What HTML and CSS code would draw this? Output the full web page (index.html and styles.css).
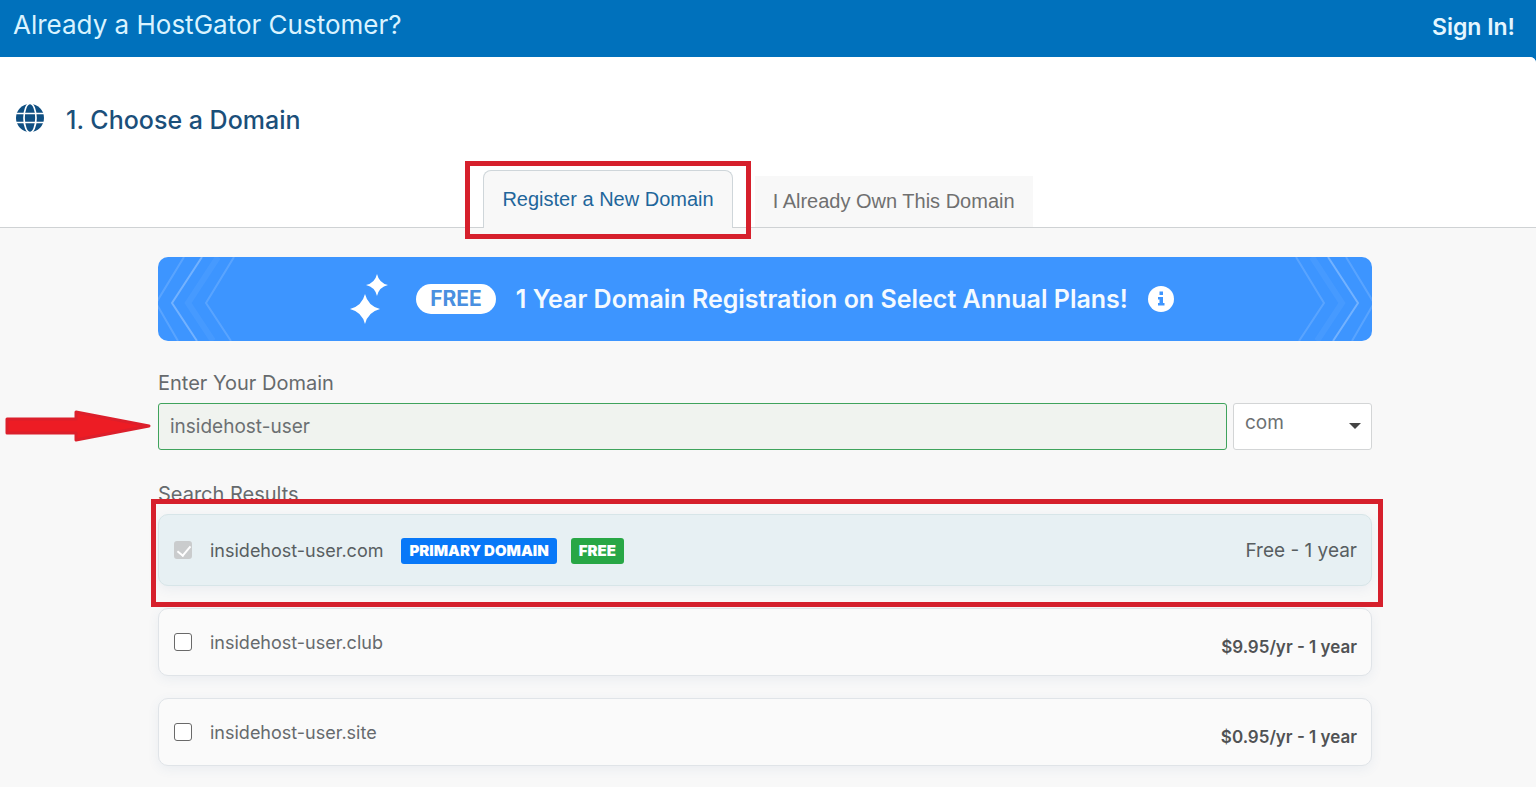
FILE: index.html
```html
<!DOCTYPE html>
<html lang="en">
  <head>
    <meta charset="UTF-8" />
    <meta name="viewport" content="width=device-width, initial-scale=1" />
    <title>Choose a Domain</title>
    <link rel="stylesheet" href="styles.css">
  </head>
  <body>
    <header class="top-bar">
      <span class="top-bar-title">Already a HostGator Customer?</span>
      <a class="sign-in" href="#">Sign In!</a>
    </header>

    <main class="page">
      <section class="intro">
        <div class="step-heading">
          <svg class="globe" viewBox="0 0 28 28" aria-hidden="true">
            <circle cx="14" cy="14" r="14" fill="#0f4f82" />
            <g fill="none" stroke="#fff" stroke-width="1.7">
              <ellipse cx="14" cy="14" rx="6" ry="14.5" />
              <path d="M0 9.5h28M0 18.5h28" />
            </g>
          </svg>
          <h1>1. Choose a Domain</h1>
        </div>

        <div class="tabs" role="tablist">
          <div class="tab-wrapper">
            <button class="tab active" role="tab" aria-selected="true">Register a New Domain</button>
            <div class="highlight highlight-tab"></div>
          </div>
          <button class="tab" role="tab" aria-selected="false">I Already Own This Domain</button>
        </div>
      </section>

      <section class="content">
        <div class="banner">
          <svg class="chevrons" viewBox="0 0 80 84" aria-hidden="true">
            <g fill="none" stroke="#fff">
              <path d="M26 0L-2 46L20 84" stroke-width="2" opacity=".15" />
              <path d="M44 0L14 46L39 84" stroke-width="2" opacity=".28" />
              <path d="M60 0L30 46L55 84" stroke-width="6" opacity=".05" />
              <path d="M76 0L48 46L73 84" stroke-width="2" opacity=".15" />
            </g>
          </svg>
          <svg class="sparkles" viewBox="0 0 38 50" aria-hidden="true">
            <path fill="#fff" d="M27 0Q29 9 38 11Q29 13 27 22Q25 13 16 11Q25 9 27 0ZM15 20Q18 32 30 35Q18 38 15 50Q12 38 0 35Q12 32 15 20Z" />
          </svg>
          <span class="pill">FREE</span>
          <span class="banner-text">1 Year Domain Registration on Select Annual Plans!</span>
          <svg class="info" viewBox="0 0 26 26" aria-hidden="true">
            <circle cx="13" cy="13" r="13" fill="#fff" />
            <path fill="#3d95ff" d="M11.500 5.500h3.500v3.500h-3.500zM10 11h5v6h1.500v2.500H10V17h1.500v-3.500H10z" />
          </svg>
          <svg class="chevrons chevrons-right" viewBox="0 0 80 84" aria-hidden="true">
            <g fill="none" stroke="#fff">
              <path d="M26 0L-2 46L20 84" stroke-width="2" opacity=".15" />
              <path d="M44 0L14 46L39 84" stroke-width="2" opacity=".28" />
              <path d="M60 0L30 46L55 84" stroke-width="6" opacity=".05" />
              <path d="M76 0L48 46L73 84" stroke-width="2" opacity=".15" />
            </g>
          </svg>
        </div>

        <label class="field-label" for="domain">Enter Your Domain</label>
        <div class="domain-row">
          <svg class="arrow" viewBox="0 0 146 32" aria-hidden="true">
            <path d="M2 9H71V2L144 16L71 30V23H2Z" fill="#ed1c24" stroke="#dc1f2b" stroke-width="3" stroke-linejoin="round" />
          </svg>
          <input class="domain-input" type="text" id="domain" value="insidehost-user" />
          <div class="tld">
            <select class="tld-select" aria-label="Extension">
              <option>com</option>
              <option>club</option>
              <option>site</option>
            </select>
          </div>
        </div>

        <h2 class="field-label">Search Results</h2>
        <div class="results">
          <div class="result primary">
            <input type="checkbox" id="result-com" checked disabled />
            <label for="result-com">insidehost-user.com</label>
            <span class="badge">PRIMARY DOMAIN</span>
            <span class="badge free">FREE</span>
            <span class="price">Free - 1 year</span>
            <div class="highlight highlight-result"></div>
          </div>
          <div class="result">
            <input type="checkbox" id="result-club" />
            <label for="result-club">insidehost-user.club</label>
            <span class="price">$9.95/yr - 1 year</span>
          </div>
          <div class="result">
            <input type="checkbox" id="result-site" />
            <label for="result-site">insidehost-user.site</label>
            <span class="price">$0.95/yr - 1 year</span>
          </div>
        </div>
      </section>
    </main>
  </body>
</html>
```
FILE: styles.css
```css
* {
  box-sizing: border-box;
}
body {
  margin: 0;
  font-family: Inter, "Liberation Sans", sans-serif;
  font-size: 18px;
  line-height: 24px;
  color: #666a6d;
  background-color: #0071bc;
}

/* Header */
.top-bar {
  display: flex;
  justify-content: space-between;
  align-items: center;
  padding: 9px 21px 16px 13px;
  font-size: 26px;
  line-height: 32px;
  color: #d9f3ff;
}
.sign-in {
  padding-top: 4px;
  font-size: 23px;
  line-height: 28px;
  font-weight: 600;
  color: #e4f6ff;
  text-decoration: none;
}

.page {
  background-color: #f8f8f8;
  border-top-right-radius: 6px;
}
.intro {
  background-color: #fff;
  border-top-right-radius: 6px;
  border-bottom: 1px solid #cfd2d4;
}
.step-heading {
  display: flex;
  align-items: center;
  gap: 22px;
  padding: 47px 16px 34px;
}
.globe {
  width: 28px;
  height: 28px;
  margin-bottom: 4px;
}
h1 {
  margin: 0;
  font-size: 25px;
  line-height: 32px;
  font-weight: 500;
  color: #1b4f7a;
}

/* Tabs */
.tabs {
  display: flex;
  justify-content: center;
  align-items: flex-end;
  gap: 22px;
  padding-right: 20px;
}
.tab-wrapper {
  position: relative;
  margin-bottom: -1px;
}
.tab {
  display: block;
  height: 51px;
  padding: 0 18px;
  font-family: "Liberation Sans", Arial, sans-serif;
  font-size: 20px;
  color: #707070;
  background-color: #f8f8f8;
  border: 0;
  cursor: pointer;
}
.tab.active {
  height: 58px;
  color: #1f669b;
  border: 1px solid #cfd6da;
  border-bottom: 0;
  border-radius: 8px 8px 0 0;
}

.highlight {
  position: absolute;
  border: 5px solid #d6202c;
  pointer-events: none;
}
.highlight-tab {
  inset: -9px -18px -11px;
}
.highlight-result {
  inset: -16px -12px -22px -8px;
}

.content {
  padding: 29px 164px 21px 158px;
}

/* Promo banner */
.banner {
  position: relative;
  display: flex;
  justify-content: center;
  align-items: center;
  gap: 20px;
  height: 84px;
  margin-bottom: 30px;
  padding-right: 6px;
  border-radius: 10px;
  overflow: hidden;
  color: #f4faff;
  background-color: #3d95ff;
}
.chevrons {
  position: absolute;
  left: 0;
  top: 0;
  width: 80px;
  height: 84px;
}
.chevrons-right {
  left: auto;
  right: 0;
  transform: scaleX(-1);
}
.sparkles {
  width: 38px;
  height: 50px;
  margin-right: 8px;
}
.pill {
  padding: 0 14px;
  border-radius: 15px;
  font-size: 21px;
  line-height: 30px;
  font-weight: 700;
  color: #4a8fe0;
  background-color: #fff;
}
.banner-text {
  font-size: 25px;
  line-height: 30px;
  font-weight: 600;
}
.info {
  width: 26px;
  height: 26px;
}

/* Domain search */
.field-label {
  display: block;
  margin: 0 0 8px;
  font-size: 20px;
  line-height: 24px;
  font-weight: 400;
}
.domain-row {
  position: relative;
  display: flex;
  gap: 6px;
  margin-bottom: 32px;
}
.arrow {
  position: absolute;
  right: 100%;
  top: 7px;
  width: 146px;
  height: 32px;
  margin-right: 7px;
}
.domain-input {
  flex: 1;
  min-width: 0;
  height: 47px;
  padding: 0 11px;
  font: inherit;
  font-size: 19px;
  color: #6c7072;
  background-color: #f0f3ef;
  border: 1px solid #3fa35c;
  border-radius: 3px;
}
.tld {
  position: relative;
  width: 139px;
}
.tld::after {
  content: "";
  position: absolute;
  right: 11px;
  top: 20px;
  border: 6px solid transparent;
  border-top-color: #444;
  border-bottom: 0;
  pointer-events: none;
}
.tld-select {
  width: 100%;
  height: 47px;
  padding: 0 11px 8px;
  font: inherit;
  font-size: 19px;
  color: #6c7072;
  background-color: #fff;
  border: 1px solid #d3d5d6;
  border-radius: 3px;
  appearance: none;
}

/* Results */
.results {
  display: flex;
  flex-direction: column;
  gap: 22px;
}
.result {
  position: relative;
  display: flex;
  align-items: center;
  height: 68px;
  padding: 0 14px 0 15px;
  border: 1px solid #e0e4e8;
  border-radius: 10px;
  background-color: #fafafa;
  box-shadow: 0 3px 12px rgba(60, 100, 150, 0.08);
}
.result.primary {
  height: 72px;
  color: #585e61;
  background-color: #e7f0f3;
  border-color: #d7e5e8;
}
.result input {
  width: 18px;
  height: 18px;
  margin: 0 18px 0 0;
  border: 1px solid #696969;
  border-radius: 3px;
  background-color: #fff;
  appearance: none;
}
.result input:checked {
  position: relative;
  border: 0;
  background-color: #cacccd;
}
.result input:checked::after {
  content: "";
  position: absolute;
  left: 6px;
  top: 2px;
  width: 6px;
  height: 11px;
  border: solid #fff;
  border-width: 0 2px 2px 0;
  transform: rotate(40deg);
}
.result label {
  margin-right: 4px;
  padding-top: 2px;
}
.badge {
  margin: 2px 0 0 14px;
  padding: 0 8px;
  border-radius: 3px;
  font-size: 15px;
  line-height: 26px;
  font-weight: 900;
  color: #fff;
  background-color: #0878f8;
}
.badge.free {
  background-color: #28a745;
}
.price {
  margin-left: auto;
  padding-top: 9px;
  font-size: 17px;
  font-weight: 600;
  color: #505254;
}
.primary .price {
  padding-top: 2px;
  font-size: 19px;
  font-weight: 400;
  color: #585e61;
}
```
